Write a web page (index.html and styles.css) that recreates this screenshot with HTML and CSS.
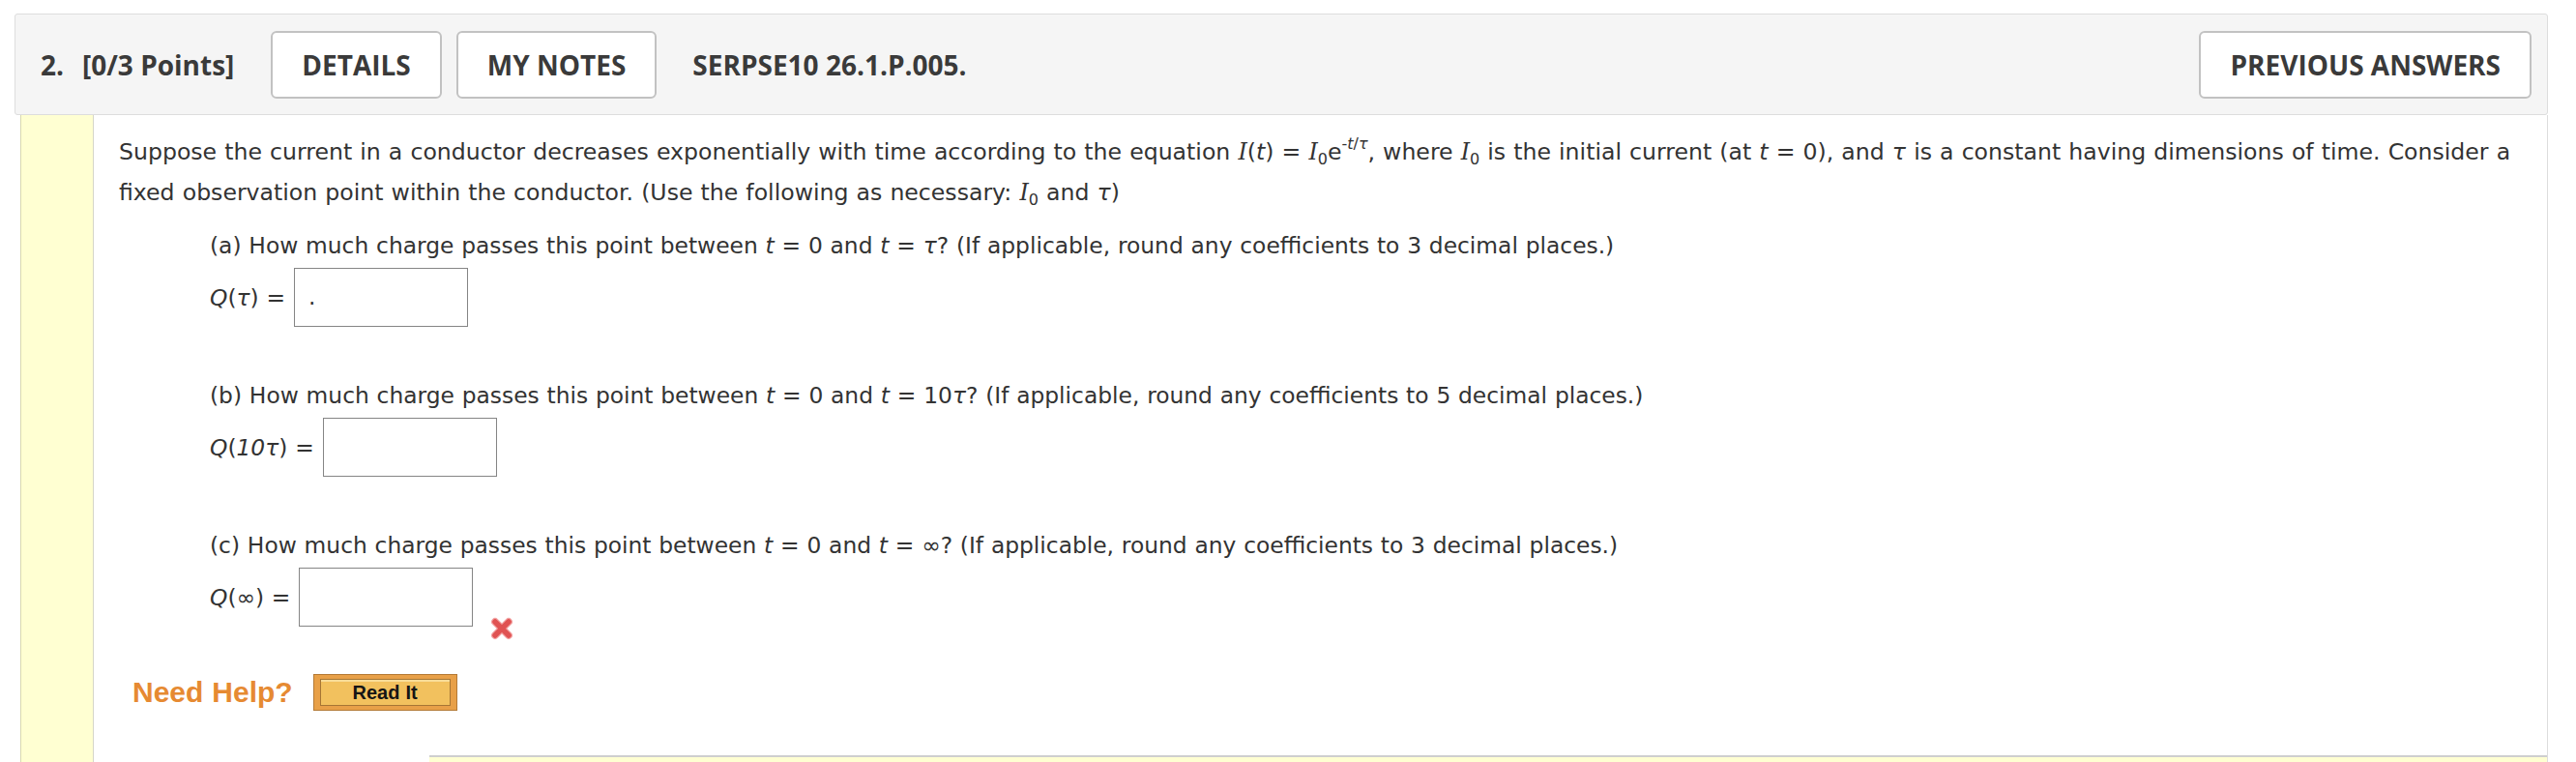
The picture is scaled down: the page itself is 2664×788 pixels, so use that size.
FILE: index.html
```html
<!DOCTYPE html>
<html lang="en">
<head>
<meta charset="utf-8">
<title>Question 2</title>
<link rel="stylesheet" href="styles.css">
</head>
<body>
<div class="question">
  <div class="q-header">
    <span class="q-num">2.</span>
    <span class="q-points">[0/3 Points]</span>
    <button class="hbtn details">DETAILS</button>
    <button class="hbtn notes">MY NOTES</button>
    <span class="q-code">SERPSE10 26.1.P.005.</span>
    <button class="hbtn prev">PREVIOUS ANSWERS</button>
  </div>
  <div class="q-body">
    <div class="strip"></div>
    <div class="q-content">
      <p class="stem">Suppose the current in a conductor decreases exponentially with time according to the equation <i class="var">I</i>(<i>t</i>) = <i class="var">I</i><sub>0</sub>e<sup>-<i>t</i>/<i>τ</i></sup>, where <i class="var">I</i><sub>0</sub> is the initial current (at <i>t</i> = 0), and <i>τ</i> is a constant having dimensions of time. Consider a fixed observation point within the conductor. (Use the following as necessary: <i class="var">I</i><sub>0</sub> and <i>τ</i>)</p>

      <div class="part">
        <p class="part-q">(a) How much charge passes this point between <i>t</i> = 0 and <i>t</i> = <i>τ</i>? (If applicable, round any coefficients to 3 decimal places.)</p>
        <div class="answer-row">
          <span class="label"><i>Q</i>(<i>τ</i>) =</span>
          <span class="ansbox">.</span>
        </div>
      </div>

      <div class="part">
        <p class="part-q">(b) How much charge passes this point between <i>t</i> = 0 and <i>t</i> = 10<i>τ</i>? (If applicable, round any coefficients to 5 decimal places.)</p>
        <div class="answer-row">
          <span class="label"><i>Q</i>(<i>10τ</i>) =</span>
          <span class="ansbox"></span>
        </div>
      </div>

      <div class="part last">
        <p class="part-q">(c) How much charge passes this point between <i>t</i> = 0 and <i>t</i> = ∞? (If applicable, round any coefficients to 3 decimal places.)</p>
        <div class="answer-row">
          <span class="label"><i>Q</i>(∞) =</span>
          <span class="ansbox"></span>
          <svg class="wrong" width="24" height="24" viewBox="0 0 24 24" aria-label="incorrect">
            <path d="M5 5 L19 19 M19 5 L5 19" stroke="#f3a5a5" stroke-width="8" stroke-linecap="round" fill="none"/>
            <path d="M5 5 L19 19 M19 5 L5 19" stroke="#e05252" stroke-width="5.5" stroke-linecap="round" fill="none"/>
          </svg>
        </div>
      </div>

      <div class="help">
        <span class="need-help">Need Help?</span>
        <span class="readit"><span class="readit-inner">Read It</span></span>
      </div>

      <div class="next-panel"></div>
    </div>
  </div>
</div>
</body>
</html>
```

FILE: styles.css
```css
html, body {
  margin: 0;
  padding: 0;
  background: #ffffff;
}

body {
  padding: 14px 29px 0 15px;
}

.question {
  width: 2620px;
}

.q-header {
  display: flex;
  align-items: center;
  background: #f5f5f5;
  border: 1px solid #dddddd;
  border-radius: 3px;
  padding: 17px 16px 16px 26px;
  font-family: "Open Sans", "Liberation Sans", sans-serif;
  font-weight: 700;
  font-size: 28px;
  color: #3a3a3a;
}

.q-num {
  margin-right: 19px;
}

.q-points {
  margin-right: 38px;
}

.hbtn {
  font-family: "Open Sans", "Liberation Sans", sans-serif;
  font-weight: 700;
  font-size: 28px;
  color: #3a3a3a;
  background: #ffffff;
  border: 2px solid #c2c2c2;
  border-radius: 6px;
  height: 70px;
  padding: 0 30px;
  line-height: 38px;
}

.notes {
  margin-left: 15px;
}

.q-code {
  margin-left: 37px;
}

.prev {
  margin-left: auto;
}

.q-body {
  display: flex;
  margin-left: 6px;
  border-right: 1px solid #dddddd;
  min-height: 700px;
}

.strip {
  width: 74px;
  flex: none;
  background: #ffffd2;
  border-left: 1px solid #d8d8b0;
  border-right: 1px solid #d6d6c8;
}

.q-content {
  flex: 1;
  padding: 17px 0 0 26px;
  font-family: "DejaVu Sans", Verdana, sans-serif;
  font-size: 23.6px;
  word-spacing: 0.6px;
  line-height: 42px;
  color: #333333;
}

.stem {
  margin: 0;
  padding-right: 30px;
}

.var {
  font-family: "DejaVu Serif", serif;
}

sub, sup {
  font-size: 16px;
  line-height: 0;
}

sub {
  vertical-align: -5px;
}

sup {
  vertical-align: 11px;
}

.part {
  padding-left: 94px;
  margin-top: 13px;
  margin-bottom: 50px;
  font-size: 23.35px;
  word-spacing: 0.4px;
}

.part + .part {
  margin-top: 0;
}

.part.last {
  margin-bottom: 0;
}

.part-q {
  margin: 0 0 2px 0;
}

.answer-row {
  display: flex;
  align-items: center;
  height: 61px;
}

.label {
  margin-right: 9px;
}

.ansbox {
  box-sizing: border-box;
  width: 180px;
  height: 61px;
  border: 1px solid #858585;
  background: #ffffff;
  padding: 8px 14px;
  line-height: 42px;
}

.wrong {
  align-self: flex-end;
  margin-left: 18px;
  margin-bottom: -14px;
}

.help {
  display: flex;
  align-items: center;
  margin-top: 49px;
  padding-left: 14px;
}

.need-help {
  font-family: "Liberation Sans", Arial, sans-serif;
  font-weight: 700;
  font-size: 30px;
  line-height: 38px;
  color: #e68a32;
  margin-right: 21px;
}

.readit {
  box-sizing: border-box;
  width: 149px;
  height: 38px;
  padding: 4px 6px;
  background: #e8a048;
  border: 1px solid #b47a36;
  display: flex;
}

.readit-inner {
  flex: 1;
  display: flex;
  align-items: center;
  justify-content: center;
  background: #f2c15e;
  border: 1px solid #a67634;
  box-shadow: inset 0 2px 0 #f8dc98;
  font-family: "Liberation Sans", Arial, sans-serif;
  font-weight: 700;
  font-size: 20px;
  color: #151515;
  line-height: 1;
}

.next-panel {
  margin-top: 46px;
  margin-left: 321px;
  height: 40px;
  background: #ffffd2;
  border-top: 2px solid #cfcfcf;
}
```
